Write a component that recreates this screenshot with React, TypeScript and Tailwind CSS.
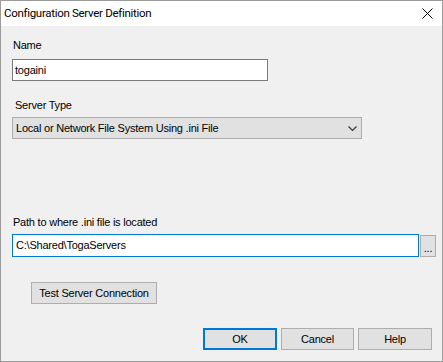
import React from "react";

const ui = { fontFamily: '"Liberation Sans", Arial, sans-serif', letterSpacing: "-0.22px" };
const titleFont = { fontFamily: 'Roboto, "Noto Sans", sans-serif', letterSpacing: "-0.3px" };

function CloseIcon() {
  return (
    <svg width="11" height="11" viewBox="0 0 11 11" className="block">
      <path d="M0.5 0.5 L10.5 10.5 M10.5 0.5 L0.5 10.5" stroke="#000" strokeWidth="1" />
    </svg>
  );
}

function Chevron() {
  return (
    <svg width="9" height="5" viewBox="0 0 9 5" className="block">
      <path d="M0.5 0.5 L4.5 4.5 L8.5 0.5" stroke="#3c3c3c" strokeWidth="1.2" fill="none" />
    </svg>
  );
}

function WinButton({ label, width, primary }: { label: string; width: string; primary?: boolean }) {
  return (
    <button
      className={`h-[22px] ${width} bg-[#e1e1e1] text-[11px] leading-[13px] text-black flex items-center justify-center ${
        primary ? "border-2 border-[#0078d7]" : "border border-[#adadad]"
      }`}
      style={ui}
    >
      {label}
    </button>
  );
}

export default function App() {
  return (
    <div className="w-[443px] h-[362px] flex flex-col border border-[#9b9b9b] bg-white" style={ui}>
      <div className="h-[25px] shrink-0 flex items-center justify-between pl-[3px] pr-[9px]">
        <span className="text-[11.5px] text-black" style={titleFont}>
          Configuration Server Definition
        </span>
        <CloseIcon />
      </div>

      <div className="flex-1 bg-[#f0f0f0] flex flex-col pl-[11px] text-[11px] leading-[13px] text-black">
        <div className="mt-[13px] h-[13px] pl-px">Name</div>
        <div className="mt-[7px] w-[256px] h-[22px] bg-white border border-[#7a7a7a] flex items-center pl-[2px]">
          togaini
        </div>

        <div className="mt-[18px] h-[13px] pl-[3px]">Server Type</div>
        <div className="mt-[5px] w-[350px] h-[22px] bg-[#e1e1e1] border border-[#adadad] flex items-center justify-between pl-[3px] pr-[4px]">
          <span>Local or Network File System Using .ini File</span>
          <Chevron />
        </div>

        <div className="mt-[77px] h-[13px] pl-px">Path to where .ini file is located</div>
        <div className="mt-[5px] flex items-center gap-[1px]">
          <div className="w-[407px] h-[23px] bg-white border border-[#0078d7] flex items-center pl-[3px]">
            C:\Shared\TogaServers
          </div>
          <div className="w-[16px] h-[22px] bg-[#e1e1e1] border border-[#adadad] flex items-end justify-center pb-[3px] leading-[9px]">
            ...
          </div>
        </div>

        <div className="mt-[25px] pl-[19px]">
          <WinButton label="Test Server Connection" width="w-[126px]" />
        </div>

        <div className="mt-[24px] flex justify-end gap-[4px] pr-[10px]">
          <WinButton label="OK" width="w-[74px]" primary />
          <WinButton label="Cancel" width="w-[73px]" />
          <WinButton label="Help" width="w-[74px]" />
        </div>
      </div>
    </div>
  );
}
